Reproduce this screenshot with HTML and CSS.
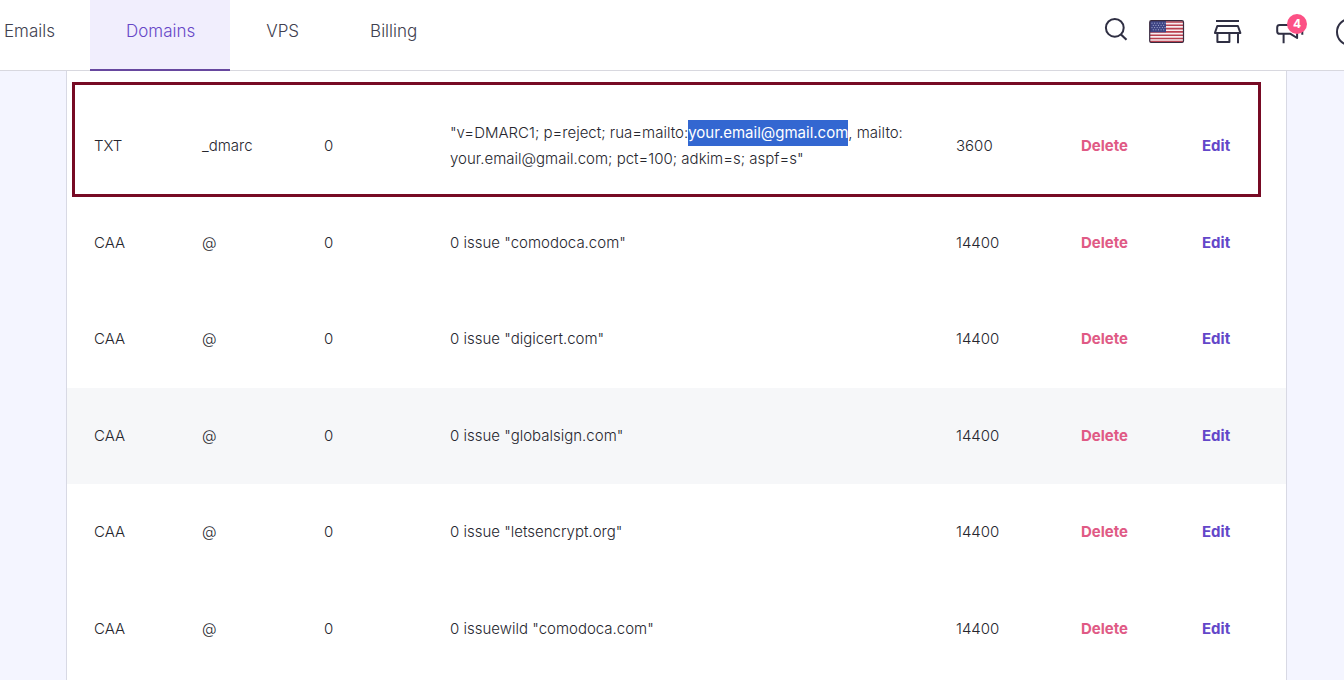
FILE: index.html
```html
<!DOCTYPE html>
<html lang="en">
<head>
<meta charset="utf-8">
<meta name="viewport" content="width=device-width, initial-scale=1">
<title>Domains</title>
<link rel="stylesheet" href="styles.css">
</head>
<body>
<header class="topbar">
  <nav class="nav">
    <a class="nav-link nav-first" href="#emails">Emails</a>
    <a class="nav-link active" href="#domains" aria-current="page">Domains</a>
    <a class="nav-link" href="#vps">VPS</a>
    <a class="nav-link" href="#billing">Billing</a>
  </nav>
  <div class="tools">
    <div class="tools-start">
      <button class="icon-button" type="button" aria-label="Search">
        <svg width="24" height="32" viewBox="1104 14 24 32" fill="none" stroke="#2f2f43" stroke-width="2"><circle cx="1114.8" cy="27.8" r="8.9"/><path d="M1120.7 34.2l5.8 5.5" stroke-width="2.2"/></svg>
      </button>
      <button class="icon-button" type="button" aria-label="Language: English">
        <svg width="36" height="32" viewBox="1149 14 36 32">
          <rect x="1149.7" y="20.7" width="33.8" height="21.8" rx="1.5" fill="#f7eef1"/>
          <path d="M1150 22h33M1150 25.3h33M1150 28.6h33M1150 31.9h33M1150 35.2h33M1150 38.5h33M1150 41.6h33" stroke="#b9404f" stroke-width="1.6"/>
          <path d="M1150 21h16v11.3h-16z" fill="#3d4383"/>
          <path d="M1151.5 23.2h14M1152.8 25.4h13M1151.5 27.6h14M1152.8 29.8h13" stroke="#a9b0d2" stroke-width="1" stroke-dasharray="1 1.6"/>
          <rect x="1149.7" y="20.7" width="33.8" height="21.8" rx="1.5" fill="none" stroke="#3a2b40" stroke-width="1.2"/>
        </svg>
      </button>
    </div>
    <button class="icon-button" type="button" aria-label="Marketplace">
      <svg width="32" height="32" viewBox="1214 14 32 32" fill="none" stroke="#2f2f43" stroke-width="2"><path d="M1216 21h23M1217.3 26h20.6l2.5 7h-25.5zM1217.4 33v9h12v-9M1238 33v10.3" stroke-linejoin="round"/></svg>
    </button>
    <button class="icon-button" type="button" aria-label="Announcements, 4 new">
      <svg width="32" height="32" viewBox="1275 14 32 32" fill="none" stroke="#2f2f43" stroke-width="2"><path d="M1291 25h-11.2q-2.6 0-2.6 2.4v4q0 2.4 2.6 2.4h10.7l6.6 4.2v-6M1283.6 34v9.3M1302.3 30v4.8" stroke-linejoin="round"/></svg>
      <span class="badge">4</span>
    </button>
    <button class="icon-button account" type="button" aria-label="Account">
      <svg width="28" height="32" viewBox="0 0 28 32" fill="none" stroke="#2f2f43" stroke-width="2"><circle cx="14" cy="18" r="13"/></svg>
    </button>
  </div>
</header>
<main class="panel">
  <table class="records" aria-label="DNS records">
    <colgroup><col class="c-type"><col class="c-name"><col class="c-priority"><col><col class="c-ttl"><col class="c-delete"><col class="c-edit"></colgroup>
    <tbody>
      <tr><td>TXT</td><td>_dmarc</td><td>0</td><td>"v=DMARC1; p=reject; rua=mailto:<mark>your.email@gmail.com</mark>, mailto:<wbr>your.email@gmail.com; pct=100; adkim=s; aspf=s"</td><td>3600</td><td><button class="action delete" type="button">Delete</button></td><td><button class="action edit" type="button">Edit</button></td></tr>
      <tr><td>CAA</td><td>@</td><td>0</td><td>0 issue "comodoca.com"</td><td>14400</td><td><button class="action delete" type="button">Delete</button></td><td><button class="action edit" type="button">Edit</button></td></tr>
      <tr><td>CAA</td><td>@</td><td>0</td><td>0 issue "digicert.com"</td><td>14400</td><td><button class="action delete" type="button">Delete</button></td><td><button class="action edit" type="button">Edit</button></td></tr>
      <tr class="hovered"><td>CAA</td><td>@</td><td>0</td><td>0 issue "globalsign.com"</td><td>14400</td><td><button class="action delete" type="button">Delete</button></td><td><button class="action edit" type="button">Edit</button></td></tr>
      <tr><td>CAA</td><td>@</td><td>0</td><td>0 issue "letsencrypt.org"</td><td>14400</td><td><button class="action delete" type="button">Delete</button></td><td><button class="action edit" type="button">Edit</button></td></tr>
      <tr><td>CAA</td><td>@</td><td>0</td><td>0 issuewild "comodoca.com"</td><td>14400</td><td><button class="action delete" type="button">Delete</button></td><td><button class="action edit" type="button">Edit</button></td></tr>
    </tbody>
  </table>
  <div class="highlight"></div>
</main>
</body>
</html>
```
FILE: styles.css
```css
* { box-sizing: border-box; }

body {
  margin: 0;
  min-height: 100vh;
  display: flex;
  flex-direction: column;
  background: #f4f5ff;
  color: #26262e;
  font-family: Inter, "Liberation Sans", sans-serif;
  font-size: 15px;
  font-weight: 300;
  line-height: 26px;
}

button {
  padding: 0;
  border: 0;
  background: none;
  font: inherit;
  color: inherit;
  cursor: pointer;
}

.topbar {
  position: relative;
  z-index: 1;
  display: flex;
  justify-content: space-between;
  overflow-x: clip;
  background: #fff;
  border-bottom: 1px solid #d8d8df;
}

.nav { display: flex; margin-bottom: -1px; }

.nav-link {
  padding: 0 35px 6px 36px;
  border-bottom: 2px solid transparent;
  color: #40404f;
  font-size: 17px;
  line-height: 63px;
  text-decoration: none;
}

.nav-first { padding-left: 4px; }

.nav-link.active {
  background: #f1eefd;
  border-color: #67479f;
  color: #6747c7;
}

.tools {
  display: flex;
  align-items: flex-start;
  gap: 29px;
  padding-top: 14px;
  margin-right: -20px;
}

.tools-start { display: flex; gap: 21px; }

.icon-button { position: relative; flex: none; height: 32px; }

.icon-button svg { display: block; }

.badge {
  position: absolute;
  top: 0;
  right: 0;
  width: 20px;
  height: 20px;
  border-radius: 50%;
  background: #fc5185;
  color: #fff;
  font-size: 12px;
  font-weight: 700;
  line-height: 19px;
  text-align: center;
}

.panel {
  position: relative;
  flex: 1;
  margin: 0 57px 0 66px;
  padding-top: 27px;
  background: #fff;
  border: solid #d8d9e4;
  border-width: 0 1px;
}

.records {
  width: 100%;
  table-layout: fixed;
  border-collapse: collapse;
}

.c-type { width: 108px; }
.c-name { width: 122px; }
.c-priority { width: 126px; }
.c-ttl { width: 125px; }
.c-delete { width: 121px; }
.c-edit { width: 111px; }

.records td { height: 96px; padding: 0 0 0 27px; }

.records tr:nth-child(odd) td { height: 97px; padding-bottom: 1px; }

.hovered { background: #f6f7f9; }

mark {
  display: inline-block;
  background: #3367d1;
  color: #fff;
  font-weight: 400;
}

.action { font-weight: 700; }
.delete { color: #e05a85; }
.edit { color: #6347c9; }

.highlight {
  position: absolute;
  top: 11px;
  right: 25px;
  left: 5px;
  height: 115px;
  border: 3px solid #770a24;
  pointer-events: none;
}
```
